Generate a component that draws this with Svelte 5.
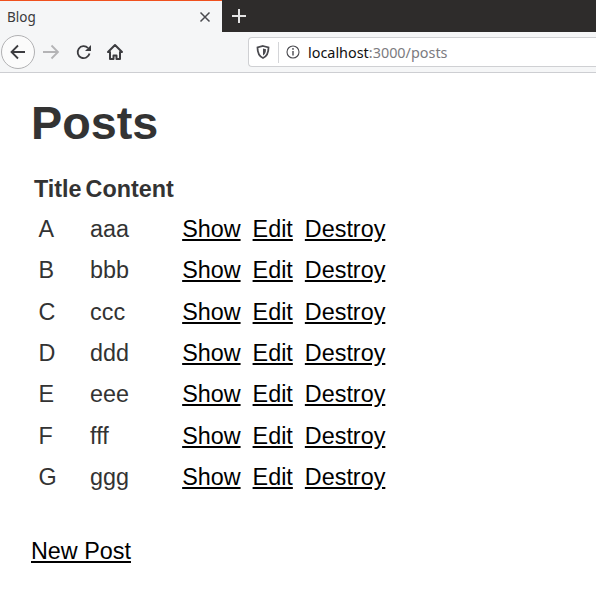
<script>
  const posts = [['A','aaa'],['B','bbb'],['C','ccc'],['D','ddd'],['E','eee'],['F','fff'],['G','ggg']];
</script>

<div class="chrome">
  <div class="tabbar">
    <div class="tab">
      <span class="tabtitle">Blog</span>
      <svg class="close" width="12" height="12" viewBox="0 0 12 12"><path d="M1.5 1.5l9 9M10.500 1.500l-9 9" stroke="#4a4a4f" stroke-width="1.5" fill="none"/></svg>
    </div>
    <svg class="plus" width="14" height="14" viewBox="0 0 14 14"><path d="M7 0v14M0 7h14" stroke="#e4e4e4" stroke-width="2" fill="none"/></svg>
  </div>
  <div class="toolbar">
    <div class="back">
      <svg width="18" height="18" viewBox="0 0 18 18"><path d="M16 9H3M9 2.500L2.500 9 9 15.500" stroke="#3c3c40" stroke-width="1.800" fill="none"/></svg>
    </div>
    <svg class="fwd" width="18" height="18" viewBox="0 0 18 18"><path d="M1 9h14M9.500 2.500L16 9l-6.500 6.500" stroke="#b4b4b6" stroke-width="1.800" fill="none"/></svg>
    <svg class="reload" width="16" height="16" viewBox="0 0 16 16"><path d="M13.500 9.500A6 6 0 1 1 12 4" stroke="#3c3c40" stroke-width="1.800" fill="none"/><path d="M15 1v6H9z" fill="#3c3c40"/></svg>
    <svg class="home" width="18" height="18" viewBox="0 0 18 18"><path d="M9 2L2 9h2v7h3.500v-3.500h3V16H14V9h2z" stroke="#3c3c40" stroke-width="2" stroke-linejoin="round" fill="none"/></svg>
    <div class="urlbar">
      <svg width="14" height="14" viewBox="0 0 14 14"><path d="M7 1l5.500 1.500C12.500 8 10.500 11.500 7 13 3.500 11.500 1.500 8 1.500 2.500z" stroke="#4a4a4f" stroke-width="1.800" fill="none"/><path d="M7 3.500l3 .8C10 7.500 8.800 9.500 7 10.500z" fill="#4a4a4f"/></svg>
      <span class="sep"></span>
      <svg width="14" height="14" viewBox="0 0 14 14"><circle cx="7" cy="7" r="6" stroke="#4a4a4f" stroke-width="1.100" fill="none"/><path d="M7 6v4.500" stroke="#4a4a4f" stroke-width="1.400"/><circle cx="7" cy="3.900" r=".9" fill="#4a4a4f"/></svg>
      <span class="url"><span class="host">localhost</span>:3000/posts</span>
    </div>
  </div>
</div>

<main>
  <h1>Posts</h1>
  <table>
    <thead>
      <tr><th>Title</th><th>Content</th><th colspan="3"></th></tr>
    </thead>
    <tbody>
      {#each posts as p}
        <tr>
          <td>{p[0]}</td>
          <td>{p[1]}</td>
          <td><a href="#show">Show</a></td>
          <td><a href="#edit">Edit</a></td>
          <td><a href="#destroy">Destroy</a></td>
        </tr>
      {/each}
    </tbody>
  </table>
  <a class="new" href="#new">New Post</a>
</main>

<style>
  :global(body) { margin: 0; background: #fff; }
  .chrome { font-family: "Noto Sans", "Open Sans", sans-serif; }
  .tabbar { display: flex; align-items: center; height: 32px; background: #2e2c2b; }
  .tab { box-sizing: border-box; width: 222px; height: 32px; background: #f5f6f7; border-top: 1px solid #f0511e; display: flex; align-items: center; justify-content: space-between; padding: 0 11px 0 7px; }
  .tabtitle { font-size: 13.500px; color: #3a3a3c; }
  .plus { margin-left: 10px; }
  .toolbar { box-sizing: border-box; height: 41px; background: #f5f6f7; border-bottom: 1px solid #cdced2; display: flex; align-items: center; padding-left: 1px; }
  .back { box-sizing: border-box; width: 34px; height: 34px; border: 1px solid #b1b1b3; border-radius: 50%; background: #fbfbfb; display: flex; align-items: center; justify-content: center; }
  .fwd { margin-left: 7px; }
  .reload { margin-left: 16px; }
  .home { margin-left: 14px; }
  .urlbar { box-sizing: border-box; margin-left: 124px; flex: 1; height: 30px; background: #fff; border: 1px solid #cfd0d3; border-right: none; border-radius: 4px 0 0 4px; display: flex; align-items: center; padding-left: 7px; }
  .sep { width: 1px; height: 21px; background: #d4d5d8; margin: 0 7px 0 8px; }
  .url { font-size: 14.400px; color: #7b7b80; margin-left: 8px; }
  .host { color: #111; }
  main { padding: 0 31px; font-family: "Liberation Sans", Arial, sans-serif; color: #333; font-size: 23.360px; }
  h1 { font-size: 46.720px; line-height: 53px; margin: 0; padding-top: 24px; font-weight: 700; }
  table { border-collapse: separate; border-spacing: 3px; margin-top: 22px; }
  th { padding: 1px 0 4px; text-align: left; font-weight: 700; line-height: 27px; }
  th:first-child { padding-right: 1px; }
  th:nth-child(2) { padding-right: 0.800px; }
  td { padding: 5px 4.500px; line-height: 28.330px; }
  a { color: #000; text-decoration: underline; }
  .new { display: block; margin-top: 39px; }
</style>
